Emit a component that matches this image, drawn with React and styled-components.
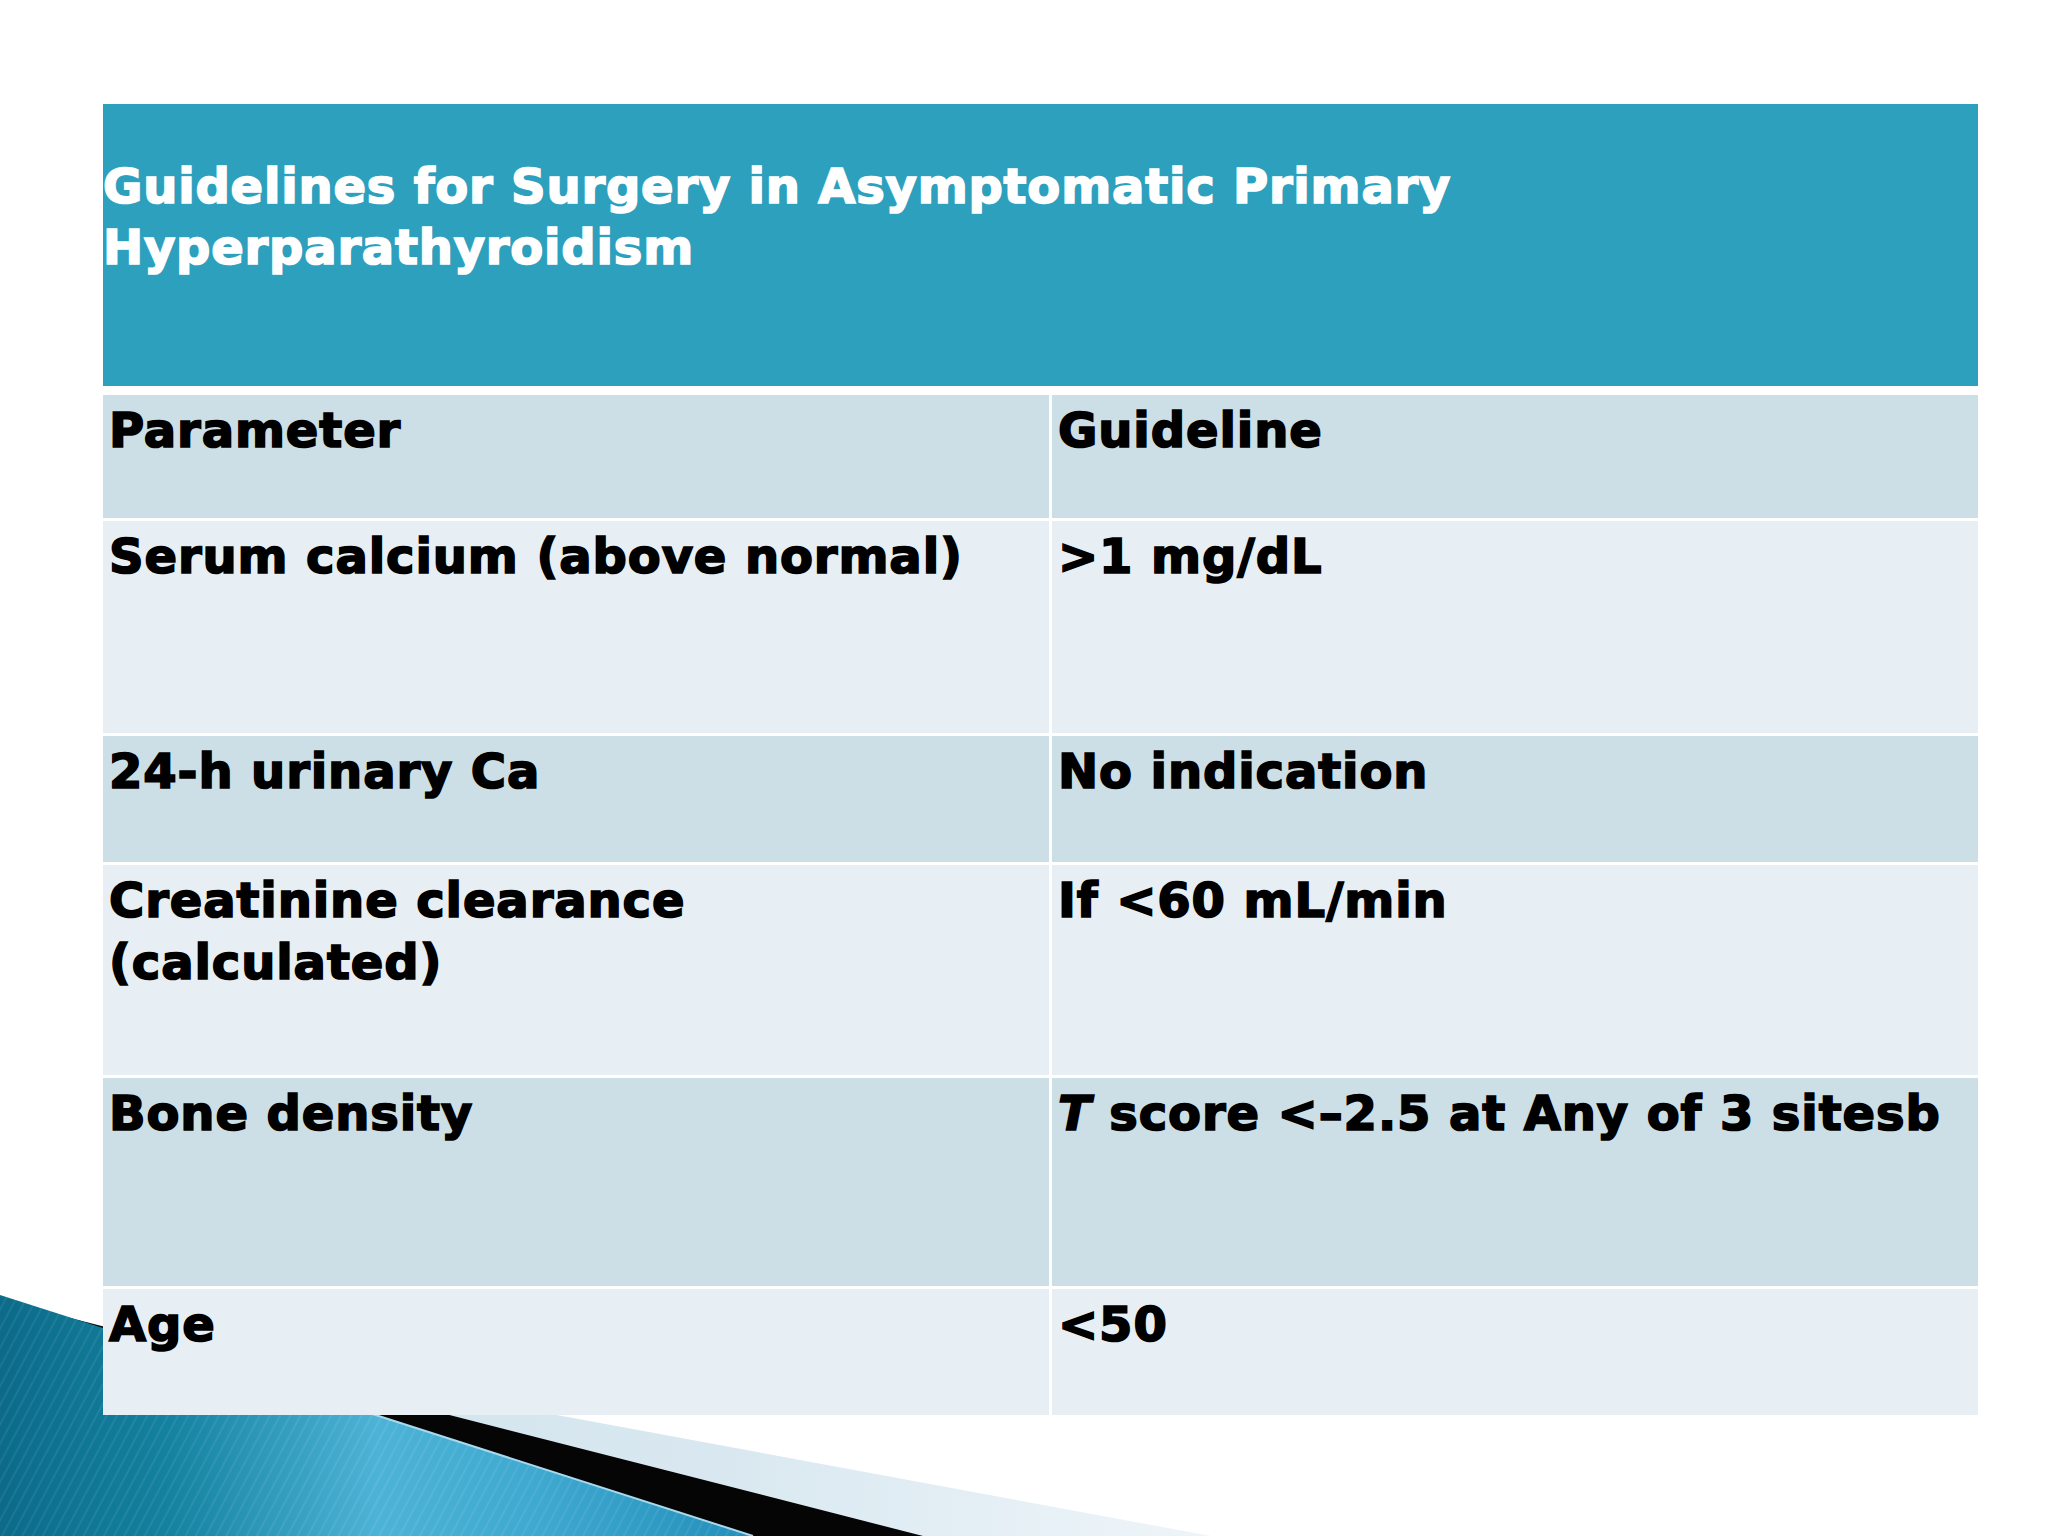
import React from 'react';
import styled, { createGlobalStyle } from 'styled-components';

const rows = [
    { param: 'Parameter', guide: 'Guideline', height: 123, tone: 'dark' },
    { param: 'Serum calcium (above normal)', guide: '>1 mg/dL', height: 212, tone: 'light' },
    { param: '24-h urinary Ca', guide: 'No indication', height: 126, tone: 'dark' },
    { param: <>Creatinine clearance<br />(calculated)</>, guide: 'If <60 mL/min', height: 210, tone: 'light' },
    { param: 'Bone density', guide: <><em>T</em> score &lt;–2.5 at Any of 3 sitesb</>, height: 208, tone: 'dark' },
    { param: 'Age', guide: '<50', height: 126, tone: 'light' },
];

const tones = {
    dark: '#cddfe6',
    light: '#e8eff4',
};

const Swoosh = () => (
    <Decoration viewBox="0 0 1300 286" width="1300" height="286">
        <defs>
            <linearGradient id="paleBand" x1="0" y1="0" x2="1" y2="0">
                <stop offset="0" stopColor="#cfe2ec" />
                <stop offset="0.6" stopColor="#d9e8f0" />
                <stop offset="1" stopColor="#eef5f9" />
            </linearGradient>
            <linearGradient id="tealBand" x1="0" y1="0" x2="753" y2="0" gradientUnits="userSpaceOnUse">
                <stop offset="0" stopColor="#0b6b89" />
                <stop offset="0.22" stopColor="#13819f" />
                <stop offset="0.5" stopColor="#4db3d6" />
                <stop offset="0.72" stopColor="#3ea8cf" />
                <stop offset="1" stopColor="#238fba" />
            </linearGradient>
            <pattern id="grain" width="9" height="9" patternUnits="userSpaceOnUse" patternTransform="rotate(28)">
                <rect width="2" height="9" fill="#ffffff" opacity="0.07" />
            </pattern>
        </defs>
        <polygon points="0,62 1211,286 0,286" fill="url(#paleBand)" />
        <polygon points="0,50 923,286 0,286" fill="#050505" />
        <polygon points="0,45 753,286 0,286" fill="url(#tealBand)" />
        <polygon points="0,45 753,286 0,286" fill="url(#grain)" />
        <line x1="360" y1="160" x2="753" y2="286" stroke="#a9d9ec" strokeWidth="2" />
    </Decoration>
);

const App = () => {
    return (
        <>
            <GlobalStyle />
            <Slide>
                <Swoosh />
                <Table>
                    <TitleBar>
                        Guidelines for Surgery in Asymptomatic Primary<br />
                        Hyperparathyroidism
                    </TitleBar>
                    {rows.map((row, index) => (
                        <Row key={index} $height={row.height}>
                            <Cell $tone={row.tone}>{row.param}</Cell>
                            <Cell $tone={row.tone}>{row.guide}</Cell>
                        </Row>
                    ))}
                </Table>
            </Slide>
        </>
    );
};

export default App;

const GlobalStyle = createGlobalStyle`
    body {
        margin: 0;
        background: #ffffff;
        font-family: "DejaVu Sans", "Liberation Sans", sans-serif;
    }
`;

const Slide = styled.div`
    position: relative;
    width: 2048px;
    height: 1536px;
    overflow: hidden;
    box-sizing: border-box;
    padding: 104px 0 0 103px;
    background: #ffffff;
`;

const Decoration = styled.svg`
    position: absolute;
    left: 0;
    bottom: 0;
    z-index: 0;
`;

const Table = styled.div`
    position: relative;
    z-index: 1;
    width: 1875px;
    display: flex;
    flex-direction: column;
    gap: 3px;
    background: #ffffff;
`;

const TitleBar = styled.div`
    height: 282px;
    box-sizing: border-box;
    margin-bottom: 6px;
    padding: 52px 0 0 0;
    background: #2da0be;
    color: #ffffff;
    font-size: 48px;
    font-weight: 700;
    line-height: 61px;
    letter-spacing: 0.8px;
    -webkit-text-stroke: 1.7px #ffffff;
`;

const Row = styled.div`
    display: grid;
    grid-template-columns: 946px 926px;
    column-gap: 3px;
    height: ${(p) => p.$height}px;
`;

const Cell = styled.div`
    box-sizing: border-box;
    padding: 4px 6px 0;
    background: ${(p) => tones[p.$tone]};
    color: #000000;
    font-size: 48px;
    font-weight: 700;
    line-height: 62px;
    letter-spacing: 0.9px;
    -webkit-text-stroke: 1.7px #000000;

    em {
        font-style: italic;
    }
`;
